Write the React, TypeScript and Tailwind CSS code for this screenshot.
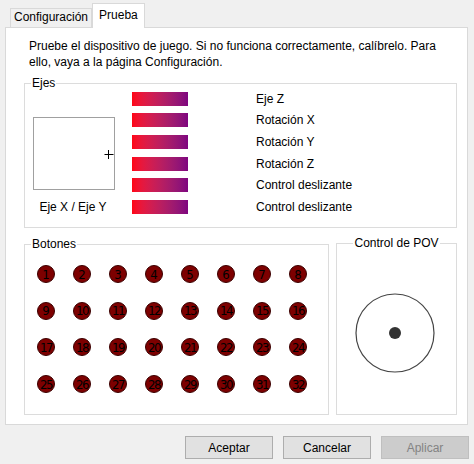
import React from "react";

const axes = ["Eje Z", "Rotación X", "Rotación Y", "Rotación Z", "Control deslizante", "Control deslizante"];
const buttons = Array.from({ length: 32 }, (_, i) => i + 1);

function Group({ label, center, className, children }: { label: string; center?: boolean; className?: string; children?: React.ReactNode }) {
  return (
    <div className={"relative border border-[#dcdcdc] " + (className ?? "")}>
      <div
        className={
          "absolute -top-[9px] bg-white px-[1px] leading-[16px] " +
          (center ? "left-0 right-0 mx-auto w-fit" : "left-[6px]")
        }
      >
        {label}
      </div>
      {children}
    </div>
  );
}

export default function App() {
  return (
    <div className="w-[474px] h-[464px] bg-[#f0f0f0] font-['Liberation_Sans',Arial,sans-serif] text-[12px] text-black flex flex-col select-none">
      {/* tabs */}
      <div className="flex items-end h-[27px] pl-[10px]">
        <div className="h-[19px] px-[3px] border border-b-0 border-[#d9d9d9] bg-[#f0f0f0] leading-[16px] whitespace-nowrap">
          Configuración
        </div>
        <div className="relative z-10 -mb-px h-[25px] w-[53px] px-[6px] pt-[3px] border border-b-0 border-[#d9d9d9] bg-white leading-[16px]">
          Prueba
        </div>
      </div>

      {/* panel */}
      <div className="ml-[5px] w-[463px] h-[398px] border border-[#d9d9d9] bg-white pt-[10px] pl-[18px]">
        <p className="pl-[5px] leading-[16px] whitespace-nowrap">
          Pruebe el dispositivo de juego. Si no funciona correctamente, calíbrelo. Para
          <br />
          ello, vaya a la página Configuración.
        </p>

        <Group label="Ejes" className="mt-[13px] w-[433px] h-[145px]">
          <div className="flex">
            <div className="w-[107px] pl-[8px] pt-[33px] flex flex-col">
              <div className="relative w-[82px] h-[73px] border border-[#a0a0a0]">
                <svg className="absolute left-[70px] top-[31px]" width="10" height="10" viewBox="0 0 10 10">
                  <line x1="0.5" y1="5.5" x2="9.5" y2="5.5" stroke="#000" strokeWidth="1" />
                  <line x1="4.5" y1="1" x2="4.5" y2="10" stroke="#000" strokeWidth="1" />
                </svg>
              </div>
              <div className="mt-[9px] w-[80px] text-center leading-[16px] whitespace-nowrap">Eje X / Eje Y</div>
            </div>
            <div className="pt-[4px] grid grid-cols-[56px_auto] gap-x-[68px] auto-rows-[21.6px] items-center">
              {axes.map((a, i) => (
                <React.Fragment key={i}>
                  <div className="h-[14px] bg-linear-to-r from-[#ff0512] to-[#7f047f]" />
                  <div className="leading-[16px] whitespace-nowrap">{a}</div>
                </React.Fragment>
              ))}
            </div>
          </div>
        </Group>

        <div className="mt-[15px] flex gap-[7px] items-start">
          <Group label="Botones" className="w-[305px] h-[171px] mt-px">
            <div className="pl-[3px] pt-[11px] grid grid-cols-[repeat(8,36px)] auto-rows-[36.6px] place-items-center">
              {buttons.map((b) => (
                <div
                  key={b}
                  className={
                    "w-[18px] h-[18px] rounded-full bg-[#7d0000] border border-[#3b0000] flex items-center justify-center text-[13px] leading-none text-black font-['DejaVu_Sans_Condensed','Liberation_Sans_Narrow','Liberation_Sans',sans-serif] " +
                    (b > 9 ? "tracking-[-1.5px]" : "")
                  }
                >
                  {b}
                </div>
              ))}
            </div>
          </Group>
          <Group label="Control de POV" center className="w-[121px] h-[172px]">
            <div className="flex justify-center pr-[4px] pt-[49px]">
              <svg width="80" height="80" viewBox="0 0 80 80">
                <circle cx="40" cy="40" r="39" fill="none" stroke="#444" strokeWidth="1.2" />
                <circle cx="40" cy="40" r="6" fill="#333" />
              </svg>
            </div>
          </Group>
        </div>
      </div>

      {/* bottom buttons */}
      <div className="mt-[11px] flex justify-end gap-[10px] pr-[5px]">
        <div className="w-[88px] h-[23px] border border-[#adadad] bg-[#e1e1e1] flex items-center justify-center">Aceptar</div>
        <div className="w-[88px] h-[23px] border border-[#adadad] bg-[#e1e1e1] flex items-center justify-center">Cancelar</div>
        <div className="w-[88px] h-[23px] border border-[#bfbfbf] bg-[#cccccc] text-[#838383] flex items-center justify-center">Aplicar</div>
      </div>
    </div>
  );
}
